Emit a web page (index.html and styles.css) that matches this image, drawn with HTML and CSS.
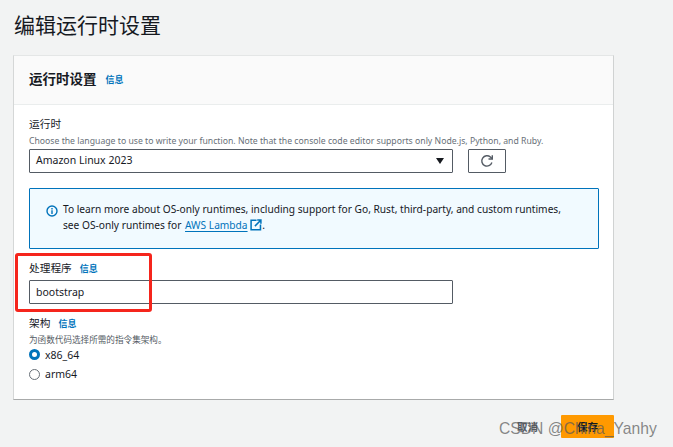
FILE: index.html
```html
<!DOCTYPE html>
<html lang="zh">
<head>
<meta charset="utf-8">
<title>编辑运行时设置</title>
<link rel="stylesheet" href="styles.css">
</head>
<body>
<main class="page">
  <h1 class="title">编辑运行时设置</h1>
  <section class="card">
    <header class="card-head">
      <h2 class="card-title">运行时设置</h2>
      <a class="info info-head">信息</a>
    </header>
    <div class="card-body">
      <div class="field field-runtime">
        <div class="label">运行时</div>
        <div class="hint">Choose the language to use to write your function. Note that the console code editor supports only Node.js, Python, and Ruby.</div>
        <div class="row">
          <div class="select">Amazon Linux 2023<span class="caret"></span></div>
          <button class="refresh" aria-label="refresh">
            <svg width="14" height="14" viewBox="0 0 14 14" fill="none" stroke="#545b64" stroke-width="1.4">
              <path d="M11.9 8.6A5.2 5.2 0 1 1 10.4 3L12 4.6"/>
              <path d="M12.3 1.2V5H8.5"/>
            </svg>
          </button>
        </div>
      </div>
      <div class="alert">
        <svg class="alert-icon" width="12" height="12" viewBox="0 0 12 12" fill="none">
          <circle cx="6" cy="6" r="5" stroke="#0073bb" stroke-width="1.4"/>
          <path d="M6 5.2V9M6 3v1.4" stroke="#0073bb" stroke-width="1.4"/>
        </svg>
        <p class="alert-text">To learn more about OS-only runtimes, including support for Go, Rust, third-party, and custom runtimes, see OS-only runtimes for <a class="link">AWS Lambda</a> <svg class="ext" width="12" height="12" viewBox="0 0 11 11" fill="none" stroke="#0073bb" stroke-width="1.4"><path d="M6 1.2H1v8.6h8.6V5M4.5 6.5 9.6 1.4M6.6 1h3.4v3.4"/></svg>.</p>
      </div>
      <div class="field field-handler">
        <div class="label">处理程序<a class="info">信息</a></div>
        <div class="input">bootstrap</div>
      </div>
      <div class="field field-arch">
        <div class="label">架构<a class="info">信息</a></div>
        <div class="hint hint-cjk">为函数代码选择所需的指令集架构。</div>
        <div class="radio-row"><span class="radio radio-on"></span>x86_64</div>
        <div class="radio-row"><span class="radio"></span>arm64</div>
      </div>
    </div>
  </section>
  <footer class="actions">
    <a class="cancel">取消</a>
    <button class="save">保存</button>
  </footer>
</main>
<div class="highlight"></div>
<div class="watermark">CSDN @China_Yanhy</div>
</body>
</html>
```
FILE: styles.css
```css
* { box-sizing: border-box; }
html, body { margin: 0; height: 100%; }
body {
  position: relative;
  height: 447px;
  overflow: hidden;
  background: #f2f3f3;
  color: #16191f;
  font-family: "Noto Sans", "Noto Sans CJK SC", sans-serif;
  font-size: 10.5px;
}
.page { padding: 11px 59px 0 13px; }
.title {
  margin: 0 0 0 1px;
  height: 26px;
  font-size: 21px;
  line-height: 26px;
  font-weight: 400;
  font-family: "Noto Sans CJK SC", sans-serif;
}
.card {
  margin-top: 18px;
  height: 345px;
  background: #fff;
  border-top: 1px solid #e4e6e6;
  border-left: 1px solid #d5d7d7;
  border-right: 1px solid #d0d2d2;
  border-bottom: 1px solid #a8aaaa;
}
.card-head {
  display: flex;
  align-items: center;
  height: 49px;
  padding: 0 15px 5px;
  background: #fafafa;
  border-bottom: 1px solid #eaeded;
}
.card-title {
  margin: 0;
  font-size: 13.5px;
  font-weight: 700;
  font-family: "Noto Sans CJK SC", sans-serif;
}
.info {
  color: #0073bb;
  font-size: 9px;
  font-weight: 700;
  font-family: "Noto Sans CJK SC", sans-serif;
  margin-left: 8px;
}
.info-head { margin-top: 3px; margin-left: 9px; }
.card-body { padding: 0 15px; }
.field-runtime { padding-top: 11px; }
.label {
  height: 19px;
  line-height: 16px;
  font-size: 10.7px;
  font-family: "Noto Sans CJK SC", sans-serif;
}
.hint {
  height: 12px;
  line-height: 12px;
  font-size: 8.69px;
  color: #687078;
  white-space: nowrap;
}
.hint-cjk { font-family: "Noto Sans CJK SC", sans-serif; font-size: 8.6px; color: #545b64; }
.row { display: flex; gap: 15px; margin-top: 2px; }
.select {
  position: relative;
  width: 424px;
  height: 24px;
  line-height: 21px;
  padding-left: 6px;
  border: 1px solid #545b64;
  border-radius: 1px;
}
.caret {
  position: absolute;
  right: 8px;
  top: 8px;
  width: 0;
  height: 0;
  border-left: 4px solid transparent;
  border-right: 4px solid transparent;
  border-top: 6px solid #16191f;
}
.refresh {
  display: flex;
  align-items: center;
  justify-content: center;
  width: 38px;
  height: 24px;
  padding: 0;
  background: #fff;
  border: 1px solid #545b64;
  border-radius: 1px;
}
.alert {
  display: flex;
  gap: 5px;
  width: 570px;
  height: 61px;
  margin-top: 15px;
  padding: 12px 16px;
  background: #f1faff;
  border: 1px solid #0073bb;
  border-radius: 1px;
}
.alert-icon { flex: none; margin-top: 4px; }
.alert-text { margin: 0; line-height: 16px; font-size: 10.18px; width: 510px; }
.link { color: #0073bb; text-decoration: underline; text-underline-offset: 2px; margin-left: 1px; }
.ext { vertical-align: -2px; }
.field-handler { padding-top: 11px; }
.field-handler .label { height: 16px; }
.input {
  width: 424px;
  height: 24px;
  line-height: 22px;
  margin-top: 4px;
  padding-left: 6px;
  border: 1px solid #545b64;
  border-radius: 1px;
}
.field-arch { padding-top: 11px; }
.field-arch .label { height: 18px; }
.radio-row {
  display: flex;
  align-items: center;
  gap: 5px;
  height: 19.5px;
}
.radio {
  width: 11px;
  height: 11px;
  border: 1px solid #687078;
  border-radius: 50%;
}
.radio-on { border: 3.5px solid #0073bb; }
.actions {
  display: flex;
  justify-content: flex-end;
  align-items: center;
  gap: 23px;
  margin-top: 15px;
}
.cancel { color: #545b64; font-family: "Noto Sans CJK SC", sans-serif; font-weight: 700; font-size: 10.5px; }
.save {
  width: 53px;
  height: 23px;
  padding: 0;
  background: #ff9900;
  border: 0;
  border-radius: 1px;
  color: #16191f;
  font-family: "Noto Sans CJK SC", sans-serif;
  font-weight: 700;
  font-size: 10.5px;
}
.highlight {
  position: absolute;
  left: 15px;
  top: 253px;
  width: 137px;
  height: 59px;
  border: 3px solid #f5251c;
  border-radius: 3px;
}
.watermark {
  position: absolute;
  left: 499px;
  top: 419px;
  font-family: "Liberation Sans", sans-serif;
  font-size: 15.7px;
  line-height: 20px;
  color: rgba(90, 90, 90, 0.72);
  white-space: nowrap;
}
```
